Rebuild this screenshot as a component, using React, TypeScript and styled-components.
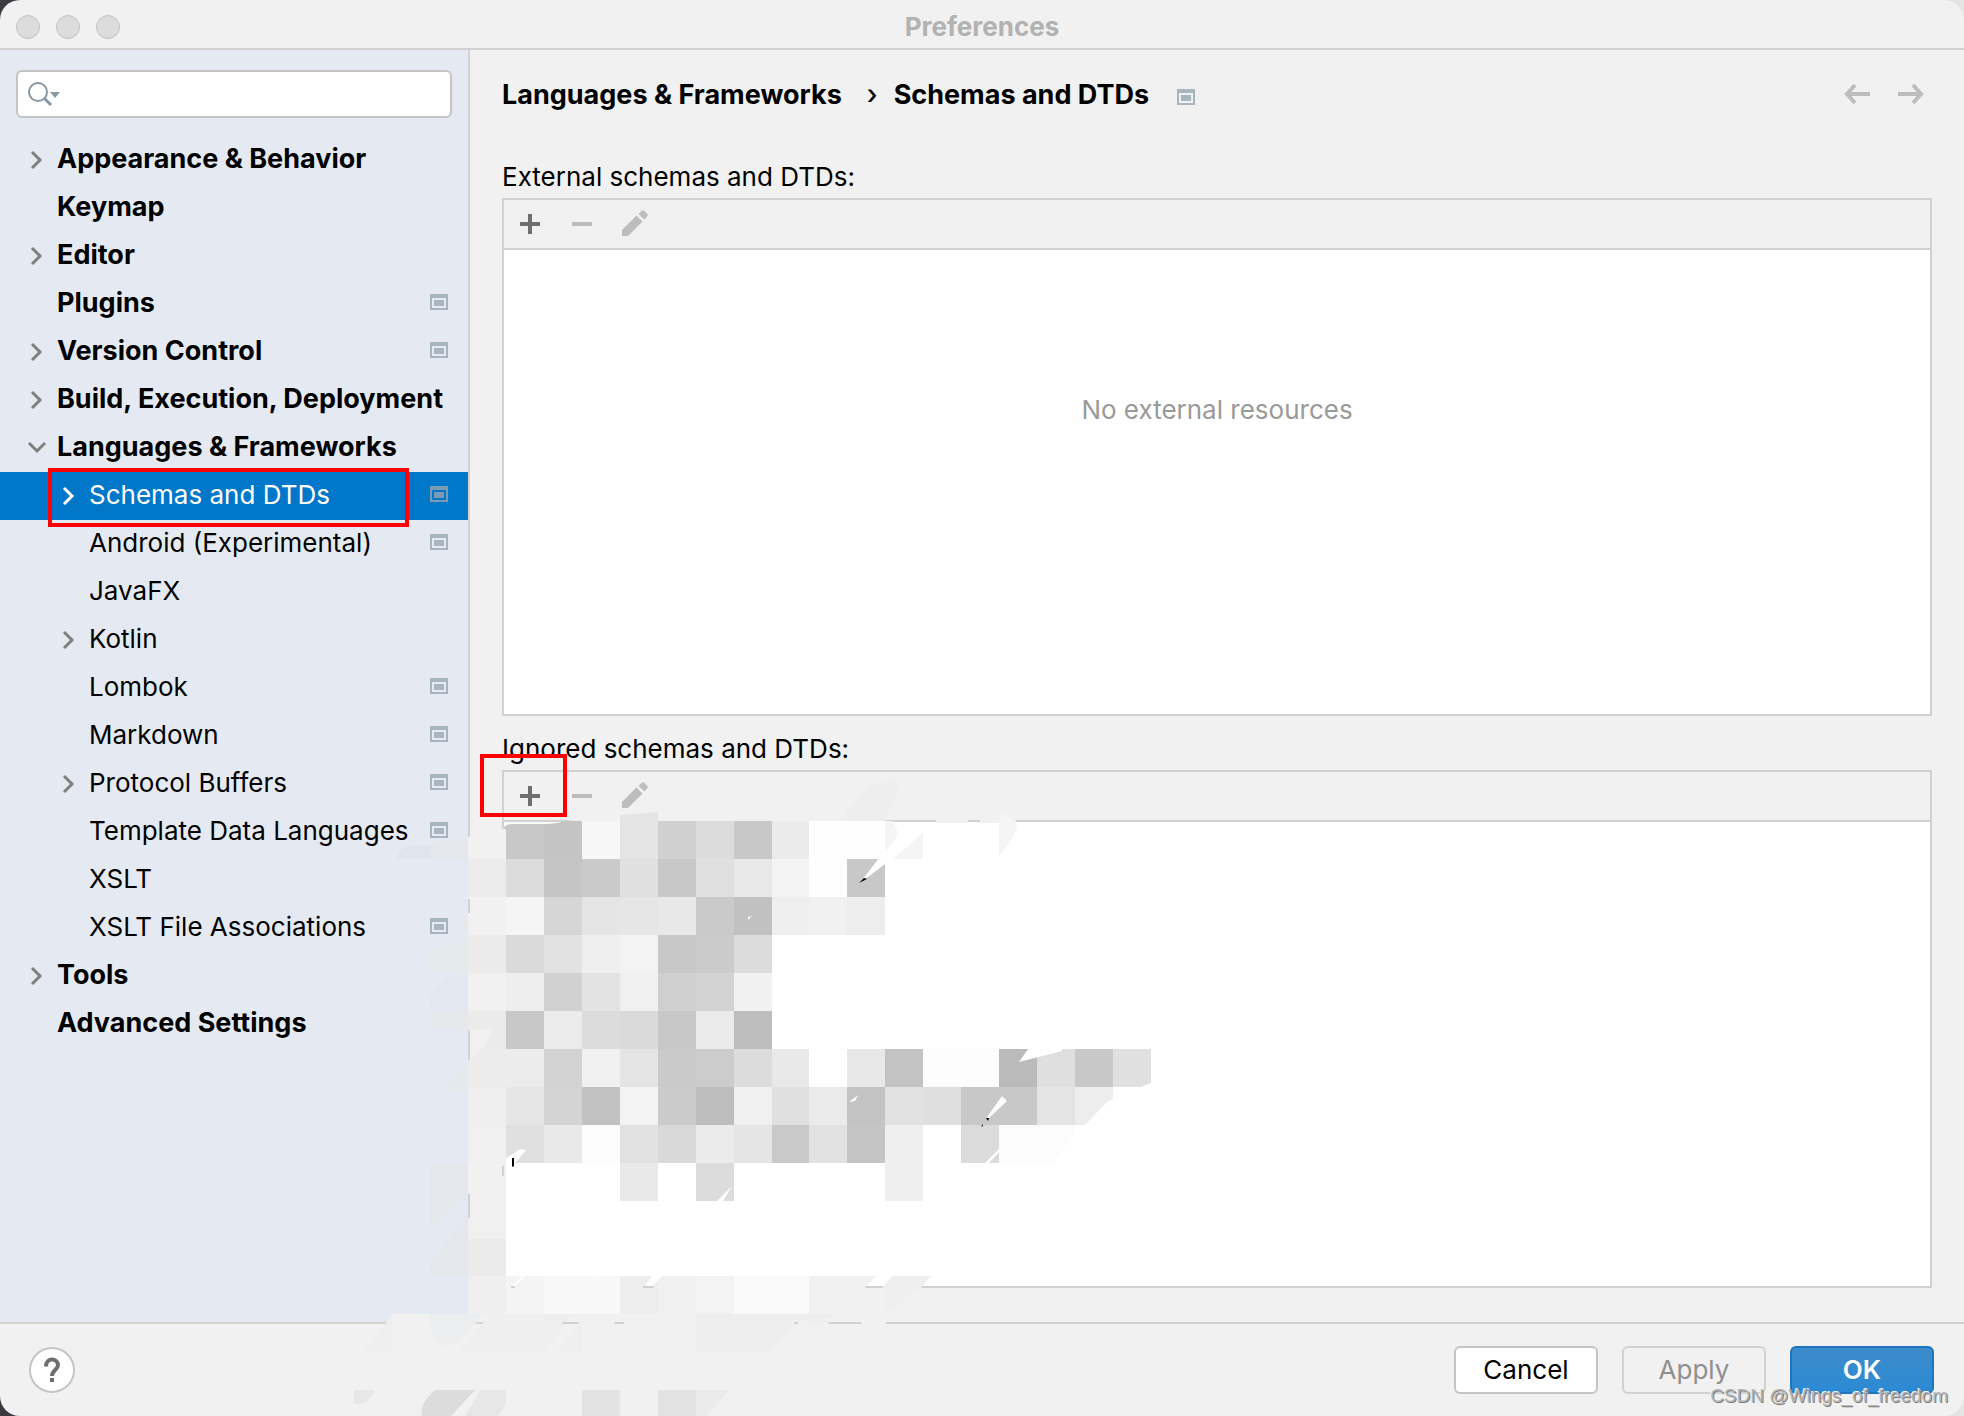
import React from 'react';
import styled, { createGlobalStyle } from 'styled-components';

const GlobalStyle = createGlobalStyle`
  *, *::before, *::after { box-sizing: border-box; }
  body {
    margin: 0;
    background: linear-gradient(90deg, #3a3c40 0%, #55575a 40%, #e4e4e4 100%);
    color: #000;
    font-family: Inter, Roboto, "Liberation Sans", sans-serif;
    font-size: 26px;
    line-height: 32px;
  }
  button, input { font: inherit; color: inherit; }
  h1, h2, p, ul { margin: 0; padding: 0; font: inherit; }
  ul { list-style: none; }
`;

const Window = styled.div`
  position: relative;
  display: flex;
  flex-direction: column;
  min-height: 100vh;
  overflow: hidden;
  border-radius: 20px;
  background: #f1f1f1;
`;

const TitleBar = styled.header`
  display: grid;
  grid-template-columns: 1fr auto 1fr;
  align-items: center;
  height: 50px;
  padding: 6px 16px 0;
  border-bottom: 2px solid #d1d1d1;
`;

const Lights = styled.div`
  display: flex;
  gap: 16px;
`;

const Light = styled.button`
  width: 24px;
  height: 24px;
  padding: 0;
  border: 1px solid #c0c0c0;
  border-radius: 50%;
  background: #dcdcdc;
`;

const Title = styled.h1`
  color: #b2b2b2;
  font-weight: 700;
`;

const Body = styled.div`
  display: flex;
  flex: 1;
`;

const Sidebar = styled.nav`
  width: 470px;
  flex-shrink: 0;
  padding-top: 20px;
  border-right: 2px solid #d1d1d1;
  background: #e5eaf2;
`;

const SearchBox = styled.label`
  display: flex;
  align-items: center;
  height: 48px;
  margin: 0 16px 18px;
  padding: 0 10px;
  border: 2px solid #c4c4c4;
  border-radius: 6px;
  background: #fff;
`;

const SearchInput = styled.input`
  flex: 1;
  min-width: 0;
  border: 0;
  outline: 0;
  background: transparent;
`;

const TreeRow = styled.button<{ $level: number; $selected?: boolean }>`
  display: flex;
  align-items: center;
  width: 100%;
  height: 48px;
  padding: 0 20px 2px ${(p) => (p.$level ? 59 : 27)}px;
  border: 0;
  background: ${(p) => (p.$selected ? '#0077c8' : 'transparent')};
  color: ${(p) => (p.$selected ? '#fff' : '#000')};
  font-size: ${(p) => (p.$level ? 26 : 27)}px;
  font-weight: ${(p) => (p.$level ? 400 : 700)};
  text-align: left;
  white-space: nowrap;
`;

const ArrowSlot = styled.span<{ $selected?: boolean }>`
  display: flex;
  flex: 0 0 30px;
  color: ${(p) => (p.$selected ? '#fff' : '#7f7f7f')};
`;

const RowLabel = styled.span`
  flex: 1;
`;

const Content = styled.main`
  display: flex;
  flex: 1;
  flex-direction: column;
  min-width: 0;
  padding: 28px 32px 34px;
`;

const Crumbs = styled.div`
  display: flex;
  align-items: center;
  height: 34px;
  margin-bottom: 46px;
  font-size: 27px;
  font-weight: 700;
`;

const CrumbMark = styled.span`
  padding: 0 16px 0 25px;
  font-weight: 500;
`;

const CrumbIcon = styled.span`
  display: flex;
  margin-left: 28px;
  padding-top: 6px;
`;

const History = styled.div`
  display: flex;
  gap: 24px;
  margin-left: auto;
  padding-right: 8px;
`;

const IconButton = styled.button`
  display: flex;
  align-items: center;
  justify-content: center;
  padding: 0;
  border: 0;
  background: transparent;
  color: #bdbdbd;
`;

const Section = styled.section`
  display: flex;
  flex: 1;
  flex-direction: column;

  & + & { margin-top: 14px; }
`;

const SectionTitle = styled.h2`
  height: 40px;
  line-height: 38px;
`;

const Panel = styled.div`
  display: flex;
  flex: 1;
  flex-direction: column;
  border: 2px solid #d1d1d1;
  background: #fff;
`;

const Toolbar = styled.div`
  display: flex;
  height: 50px;
  border-bottom: 2px solid #d1d1d1;
  background: #f1f1f1;
`;

const ToolButton = styled(IconButton)`
  width: 52px;
  color: #bdbdbd;

  &:enabled { color: #6e6e6e; }
`;

const EmptyText = styled.p`
  margin-top: 144px;
  color: #9a9a9a;
  text-align: center;
`;

const Footer = styled.footer`
  display: flex;
  align-items: center;
  gap: 24px;
  height: 94px;
  padding: 0 30px 0 29px;
  border-top: 2px solid #d1d1d1;
`;

const HelpButton = styled.button`
  display: flex;
  align-items: center;
  justify-content: center;
  width: 46px;
  height: 46px;
  margin-right: auto;
  padding: 0;
  border: 2px solid #c4c4c4;
  border-radius: 50%;
  background: #fff;
  color: #6e6e6e;
`;

const ActionButton = styled.button<{ $kind?: 'primary' }>`
  width: 144px;
  height: 48px;
  padding: 0;
  border: 2px solid ${(p) => (p.$kind ? '#1e75bd' : '#c4c4c4')};
  border-radius: 6px;
  background: ${(p) => (p.$kind ? 'linear-gradient(#3d8ccb, #2b8ad4)' : '#fff')};
  color: ${(p) => (p.$kind ? '#fff' : '#000')};
  font-weight: ${(p) => (p.$kind ? 600 : 400)};

  &:disabled {
    border-color: #d1d1d1;
    background: transparent;
    color: #8f8f8f;
  }
`;

const Smudge = styled.svg`
  position: absolute;
  top: 0;
  left: 0;
  pointer-events: none;
`;

const Marker = styled.div<{ $x: number; $y: number; $w: number; $h: number }>`
  position: absolute;
  left: ${(p) => p.$x}px;
  top: ${(p) => p.$y}px;
  width: ${(p) => p.$w}px;
  height: ${(p) => p.$h}px;
  border: 4px solid #f00;
  pointer-events: none;
`;

const Watermark = styled.div`
  position: absolute;
  right: 16px;
  bottom: 8px;
  color: #b4b4b4;
  font-family: "Liberation Sans", sans-serif;
  font-size: 19px;
  line-height: 24px;
  text-shadow: 1px 1px 0 #7c7c7c, -1px -1px 0 #f4f4f4;
  pointer-events: none;
`;

const ProjectIcon = ({ dim }: { dim?: boolean }) => (
  <svg width="18" height="18" viewBox="0 0 18 18" fill={dim ? '#7b9bb3' : '#a7b5bf'} aria-hidden="true">
    <path fillRule="evenodd" d="M0 0h18v16H0zM2 4v10h14V4z" />
    <path d="M4 6h10v6H4z" />
  </svg>
);

const Chevron = ({ open }: { open?: boolean }) => (
  <svg width="20" height="20" viewBox="0 0 20 20" fill="none" stroke="currentColor" strokeWidth="3" aria-hidden="true">
    <path d={open ? 'M2 6l8 8 8-8' : 'M5 3l8 8-8 8'} />
  </svg>
);

const Arrow = ({ back }: { back?: boolean }) => (
  <svg width="28" height="26" viewBox="0 0 28 26" fill="none" stroke="currentColor" strokeWidth="4" aria-hidden="true">
    <path d={back ? 'M26 12H4M11 3L3 12l8 9' : 'M2 12h22M17 3l8 9-8 9'} />
  </svg>
);

const PlusIcon = () => (
  <svg width="20" height="20" viewBox="0 0 20 20" fill="currentColor" aria-hidden="true">
    <path d="M8 0h4v8h8v4h-8v8H8v-8H0V8h8z" />
  </svg>
);

const MinusIcon = () => (
  <svg width="20" height="20" viewBox="0 0 20 20" fill="currentColor" aria-hidden="true">
    <path d="M0 8h20v4H0z" />
  </svg>
);

const PencilIcon = () => (
  <svg width="28" height="28" viewBox="-2 0 28 28" fill="currentColor" aria-hidden="true">
    <path d="M0 20L14.500 5.500l6 6L6 26H0z" />
    <path d="M16.500 4L19.500 1q1.500-1.500 3 0l2.500 2.500q1.500 1.500 0 3L22.500 9.500z" />
  </svg>
);

const SearchIcon = () => (
  <svg width="34" height="26" viewBox="0 0 34 26" fill="none" stroke="#8797a2" strokeWidth="2" aria-hidden="true">
    <circle cx="10" cy="11" r="9" />
    <path d="M16 17l7 7" strokeWidth="3" />
    <path d="M22 11h10l-5 6z" fill="#8797a2" stroke="none" />
  </svg>
);

const HelpIcon = () => (
  <svg width="18" height="26" viewBox="0 0 18 26" fill="none" stroke="currentColor" strokeWidth="4" aria-hidden="true">
    <path d="M3 9.500C3 0 15 1 15 8c0 5-6 5-6 11" />
    <path d="M7 23h4" />
  </svg>
);

type Item = { label: string; level: number; arrow?: 'closed' | 'open'; project?: boolean; selected?: boolean };

const items: Item[] = [
  { label: 'Appearance & Behavior', level: 0, arrow: 'closed' },
  { label: 'Keymap', level: 0 },
  { label: 'Editor', level: 0, arrow: 'closed' },
  { label: 'Plugins', level: 0, project: true },
  { label: 'Version Control', level: 0, arrow: 'closed', project: true },
  { label: 'Build, Execution, Deployment', level: 0, arrow: 'closed' },
  { label: 'Languages & Frameworks', level: 0, arrow: 'open' },
  { label: 'Schemas and DTDs', level: 1, arrow: 'closed', project: true, selected: true },
  { label: 'Android (Experimental)', level: 1, project: true },
  { label: 'JavaFX', level: 1 },
  { label: 'Kotlin', level: 1, arrow: 'closed' },
  { label: 'Lombok', level: 1, project: true },
  { label: 'Markdown', level: 1, project: true },
  { label: 'Protocol Buffers', level: 1, arrow: 'closed', project: true },
  { label: 'Template Data Languages', level: 1, project: true },
  { label: 'XSLT', level: 1 },
  { label: 'XSLT File Associations', level: 1, project: true },
  { label: 'Tools', level: 0, arrow: 'closed' },
  { label: 'Advanced Settings', level: 0 },
];

/* Column and row edges of the pixelated censor brush, and the grey of each cell (two hex digits). */
const colX = [468, 506, 544, 582, 620, 658, 696, 734, 772, 809, 847, 885, 923, 961, 999, 1037, 1075, 1113, 1151];
const rowY = [821, 859, 897, 935, 973, 1011, 1049, 1087, 1125, 1163, 1201, 1239, 1276, 1314];
const cells = [
  '-- -- -- f7 e4 d0 dc c8 eb fe fe',
  'ec dc c5 ca e0 c8 e0 e9 f3 fe c8',
  'f1 f5 d6 e5 e6 e8 ca c1 ef f1 ed',
  'eb da e2 ef f3 c8 cb dc',
  'f1 ee d1 e3 f0 cf d3 f1',
  'eb c8 ec dc da c8 eb bd',
  'ec ec d3 f1 e4 ca cc dc e9 ff e8 c3 fd fd bb df c8 e0',
  'ef e6 d4 c2 f3 cb bd f0 e0 ea c3 e1 df c8 c8 e4',
  'f0 e0 e9 fc e1 d9 eb e5 c9 e2 c5 ef ff db',
  'f1 ff ff ff e9 ff dc ff ff ff ff ef',
  'f0',
  'eb',
  'ef f4 f8 f8 ee f0 f3 fa fa f1 f1',
];

const strokes: [string, string][] = [
  /* faint traces over the sidebar */
  ['#dee5ed', 'M397 859q3-13 13-13l20-1v14z'],
  ['#e4e8ed', 'M430 844l38-7v22h-38z'],
  ['#e5e9ec', 'M468 912q-12 14 0 22z'],
  ['#e5eaec', 'M426 955l42-18v36h-40z'],
  ['#e3e8f0', 'M448 976l20-3v38h-38v-16z'],
  ['#e5e9ec', 'M430 1011h38v19h-36z'],
  ['#e4e9ee', 'M441 1092l27-32v32z'],
  ['#e4e8ed', 'M430 1163h38v29l-38 38z'],
  ['#e4e8ec', 'M468 1215v61h-38v-12z'],
  /* first row of the brush, over the toolbar edge */
  ['#f1f1f1', 'M468 837l34-8 4-4v34h-38zM566 821l54-6 265 1v5zM936 818h32v5h-32zM980 818h36v5h-36z'],
  ['#c8c8c8', 'M503 829q2-5 9-5h32v35h-38v-30z'],
  ['#c4c4c4', 'M544 824q12 0 22-3h16v38h-38z'],
  ['#e4e4e4', 'M620 815l38-3v9h-38z'],
  ['#eeeeee', 'M847 808l5-2 19-23h14l5-6q10 3 7 15l-9 20-3 9h-38z'],
  ['#f5f5f5', 'M885 821h7q10 12 0 22l-7 9zM893 859l30-26v26zM999 814q10 0 18 12 0 8-18 30z'],
  /* ends of the strokes */
  ['#ffffff', 'M879 858l-16 21 5-2 17-13v-6zM748 917l4-1-4 4zM1028 1049l-9 13 43-11v-2zM1151 1083l-10 4h10z'],
  ['#ffffff', 'M849 1102l9-7-3 6zM1002 1096l5 5-19 18-1-2zM999 1149l-14 14h4l10-11zM506 1158l15-9 5 1-11 13h-9zM732 1186l-15 15h6z'],
  ['#ededed', 'M1075 1087h38v12l-6 3-22 23h-10z'],
  ['#fcfcfc', 'M999 1125h76v9l-22 29h-54z'],
  ['#f1f1f1', 'M468 1060v-30l25-1-8 17z'],
  ['#000000', 'M859 883l5-5 3 1zM986 1118h3l-1 3zM981 1127l2-3v2zM512 1158h2v8l-2 1z'],
  ['#d1d1d1', 'M468 899h2v14h-2zM468 1030h2v29l-2 2zM468 1194h2v24h-2zM502 1167l2-2v10l-2 2z'],
  /* bottom edge of the panel */
  ['#efefef', 'M885 1276h46l-10 12-36 26z'],
  ['#ffffff', 'M522 1276h3l-10 10h-3zM598 1276h2l-10 9zM652 1276h10l-9 10h-8zM876 1276h16l-8 10h-17z'],
  ['#d1d1d1', 'M511 1286h4v2h-4zM643 1286h11l-1 2h-10zM866 1286h18l-2 2h-17z'],
  /* strokes over the footer */
  ['#f1f1f1', 'M394 1314h492v12H386z'],
  ['#efefef', 'M393 1314v38h-31zM484 1322l8-8h84l-32 38h-86zM586 1314h-4v38h-26z'],
  ['#ebedef', 'M430 1314h53l-23 26q-13 11-24 0-6-7-6-26z'],
  ['#eeeeee', 'M696 1314h140l-14 10q-10 4-18-6l-36 34h-72z'],
  ['#d1d1d1', 'M477 1322h7l-2 2h-7zM563 1322h16v2h-17zM615 1322h9v2h-10zM795 1322h3v2h-4zM829 1322h32v2h-33z'],
  ['#e7e7e7', 'M354 1390h21q-8 16-21 14zM481 1390h25v14l-8 12h-33z'],
  ['#dcdcdc', 'M435 1390h40l-24 26h-29q-3-12 13-26z'],
  ['#e3e3e3', 'M582 1390h38v26h-38zM658 1390h38v26h-38z'],
  ['#ebebeb', 'M696 1390h34l-24 26h-10z'],
];

const CensorBrush = () => (
  <Smudge width="1160" height="1416" viewBox="0 0 1160 1416" aria-hidden="true">
    {cells.map((row, r) =>
      row.split(' ').map((v, c) =>
        v === '--' ? null : (
          <rect
            key={`${r}-${c}`}
            x={colX[c]}
            y={rowY[r]}
            width={colX[c + 1] - colX[c]}
            height={rowY[r + 1] - rowY[r]}
            fill={`#${v}${v}${v}`}
          />
        ),
      ),
    )}
    {strokes.map(([fill, d], i) => (
      <path key={i} fill={fill} d={d} />
    ))}
  </Smudge>
);

const ListToolbar = () => (
  <Toolbar>
    <ToolButton aria-label="Add"><PlusIcon /></ToolButton>
    <ToolButton aria-label="Remove" disabled><MinusIcon /></ToolButton>
    <ToolButton aria-label="Edit" disabled><PencilIcon /></ToolButton>
  </Toolbar>
);

export default function App() {
  return (
    <>
      <GlobalStyle />
      <Window>
        <TitleBar>
          <Lights>
            <Light aria-label="Close" />
            <Light aria-label="Minimize" />
            <Light aria-label="Zoom" />
          </Lights>
          <Title>Preferences</Title>
        </TitleBar>
        <Body>
          <Sidebar>
            <SearchBox>
              <SearchIcon />
              <SearchInput type="text" aria-label="Search settings" />
            </SearchBox>
            <ul>
              {items.map((item) => (
                <li key={item.label}>
                  <TreeRow $level={item.level} $selected={item.selected}>
                    <ArrowSlot $selected={item.selected}>
                      {item.arrow && <Chevron open={item.arrow === 'open'} />}
                    </ArrowSlot>
                    <RowLabel>{item.label}</RowLabel>
                    {item.project && <ProjectIcon dim={item.selected} />}
                  </TreeRow>
                </li>
              ))}
            </ul>
          </Sidebar>
          <Content>
            <Crumbs>
              <span>Languages &amp; Frameworks</span>
              <CrumbMark>›</CrumbMark>
              <span>Schemas and DTDs</span>
              <CrumbIcon><ProjectIcon /></CrumbIcon>
              <History>
                <IconButton aria-label="Back" disabled><Arrow back /></IconButton>
                <IconButton aria-label="Forward" disabled><Arrow /></IconButton>
              </History>
            </Crumbs>
            <Section>
              <SectionTitle>External schemas and DTDs:</SectionTitle>
              <Panel>
                <ListToolbar />
                <EmptyText>No external resources</EmptyText>
              </Panel>
            </Section>
            <Section>
              <SectionTitle>Ignored schemas and DTDs:</SectionTitle>
              <Panel>
                <ListToolbar />
              </Panel>
            </Section>
          </Content>
        </Body>
        <Footer>
          <HelpButton aria-label="Help"><HelpIcon /></HelpButton>
          <ActionButton>Cancel</ActionButton>
          <ActionButton disabled>Apply</ActionButton>
          <ActionButton $kind="primary">OK</ActionButton>
        </Footer>
        <CensorBrush />
        <Marker $x={48} $y={468} $w={361} $h={59} />
        <Marker $x={480} $y={754} $w={87} $h={63} />
        <Watermark>CSDN @Wings_of_freedom</Watermark>
      </Window>
    </>
  );
}
